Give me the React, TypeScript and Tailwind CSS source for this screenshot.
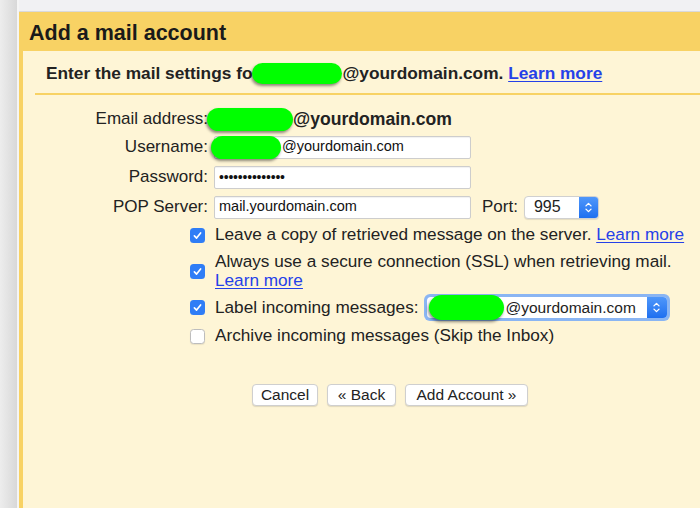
import React from 'react';

// green redaction marks painted over the screenshot
function Blob({ className = '' }: { className?: string }) {
  return (
    <span
      className={`inline-block shrink-0 rounded-full bg-[#00ff00] shadow-[-1px_2px_3px_rgba(0,0,0,0.45)] ${className}`}
    />
  );
}

function Stepper({ className = '' }: { className?: string }) {
  return (
    <span className={`flex items-center justify-center bg-gradient-to-b from-[#4f97fa] to-[#1d6ff0] ${className}`}>
      <svg viewBox="0 0 10 16" className="h-[15px] w-[9px]">
        <path
          d="M2.2 6.2 5 3.4l2.8 2.8M2.2 9.8 5 12.6l2.8-2.8"
          fill="none"
          stroke="white"
          strokeWidth="1.5"
          strokeLinecap="round"
          strokeLinejoin="round"
        />
      </svg>
    </span>
  );
}

function Check({ on }: { on: boolean }) {
  if (!on) {
    return (
      <span className="h-[15px] w-[15px] shrink-0 rounded-[3.5px] border border-[#bdbdbd] bg-white shadow-[0_1px_1px_rgba(0,0,0,0.08)]" />
    );
  }
  return (
    <span className="flex h-[15px] w-[15px] shrink-0 items-center justify-center rounded-[3.5px] bg-[#2f7df6]">
      <svg viewBox="0 0 12 12" className="h-[11px] w-[11px]">
        <path
          d="M2.6 6.4 5 8.8l4.4-5.6"
          fill="none"
          stroke="white"
          strokeWidth="1.8"
          strokeLinecap="round"
          strokeLinejoin="round"
        />
      </svg>
    </span>
  );
}

function Field({ children }: { children?: React.ReactNode }) {
  return (
    <div className="ml-[6px] flex h-[23px] w-[257px] items-center rounded-[2px] border border-[#cdcdcd] bg-white pl-[4px] text-[14.5px] text-[#111] shadow-[inset_0_1px_1px_rgba(0,0,0,0.06)]">
      {children}
    </div>
  );
}

function Label({ children }: { children: React.ReactNode }) {
  return <span className="w-[185px] shrink-0 text-right text-[17px]">{children}</span>;
}

function Btn({ children, w }: { children: React.ReactNode; w: string }) {
  return (
    <button
      className={`flex h-[22px] items-center justify-center rounded-[4px] border border-[#cfcfcf] bg-white text-[15.5px] leading-none text-[#222] shadow-[0_1px_1px_rgba(0,0,0,0.12)] ${w}`}
    >
      {children}
    </button>
  );
}

const link = 'text-[#2541e8] underline underline-offset-2';

export default function App() {
  return (
    <div className="flex h-[508px] w-[700px] overflow-hidden bg-[#fef5d6] font-['Liberation_Sans',Arial,sans-serif] text-[#222]">
      <div className="w-[17px] shrink-0 bg-gradient-to-r from-[#ededed] to-[#d8d8d8]" />
      <div className="w-[2px] shrink-0 bg-[#f5f5f5]" />

      <div className="flex min-w-0 flex-1 flex-col">
        <div className="h-[12px] shrink-0 border-b border-[#d9d9db] bg-[#f1f1f3]" />

        {/* Header */}
        <div className="flex h-[39px] shrink-0 items-center bg-[#f8d264] pl-[10px] pt-[4px]">
          <h1 className="text-[21.5px] font-bold leading-none text-[#1a1a1a]">Add a mail account</h1>
        </div>

        {/* Body */}
        <div className="flex flex-1 flex-col border-l-4 border-[#f8d264] pt-[12px] text-[17.2px]">
          <div className="flex h-[20px] items-center whitespace-nowrap pl-[23px] text-[17.3px] font-bold leading-[20px]">
            Enter the mail settings fo
            <Blob className="h-[21px] w-[90px]" />
            @yourdomain.com.&nbsp;<a className={link}>Learn more</a>
          </div>
          <div className="ml-[12px] mt-[10px] h-[2px] bg-[#f8d264]" />

          {/* Form rows */}
          <div className="mt-[11px] flex flex-col whitespace-nowrap">
            <div className="flex h-[26px] items-center">
              <Label>Email address:</Label>
              <Blob className="-ml-[1px] h-[23px] w-[86px]" />
              <span className="text-[17.6px] font-bold">@yourdomain.com</span>
            </div>
            <div className="flex h-[30px] items-center">
              <Label>Username:</Label>
              <Field>
                <Blob className="-ml-[8px] h-[23px] w-[70px]" />
                <span className="ml-[1px]">@yourdomain.com</span>
              </Field>
            </div>
            <div className="flex h-[30px] items-center">
              <Label>Password:</Label>
              <Field>
                <span className="text-[14px] tracking-[-0.2px]">••••••••••••••</span>
              </Field>
            </div>
            <div className="flex h-[30px] items-center">
              <Label>POP Server:</Label>
              <Field>mail.yourdomain.com</Field>
              <span className="ml-[11px] text-[17px]">Port:</span>
              <div className="ml-[6px] flex h-[23px] w-[75px] items-center overflow-hidden rounded-[4px] border border-[#d0d0d0] bg-white shadow-[0_1px_1px_rgba(0,0,0,0.1)]">
                <span className="flex-1 pl-[9px] text-[16px]">995</span>
                <Stepper className="h-full w-[19px]" />
              </div>
            </div>
          </div>

          {/* Options */}
          <div className="flex flex-col whitespace-nowrap pl-[167px]">
            <div className="mt-[3px] flex h-[20px] items-center gap-[10px]">
              <Check on />
              <span>
                Leave a copy of retrieved message on the server. <a className={link}>Learn more</a>
              </span>
            </div>
            <div className="mt-[7px] flex items-center gap-[10px] leading-[19px]">
              <Check on />
              <div className="flex flex-col">
                <span>Always use a secure connection (SSL) when retrieving mail.</span>
                <a className={link}>Learn more</a>
              </div>
            </div>
            <div className="mt-[3px] flex h-[29px] items-center gap-[10px]">
              <Check on />
              <span>Label incoming messages:</span>
              <div className="-ml-[5px] rounded-[6px] bg-[#8ab5f3] p-[3px]">
                <div className="flex h-[21px] w-[240px] items-center rounded-[4px] bg-white">
                  <Blob className="ml-[2px] h-[25px] w-[75px]" />
                  <span className="ml-[2px] flex-1 text-[15.5px]">@yourdomain.com</span>
                  <Stepper className="h-full w-[20px] rounded-r-[4px]" />
                </div>
              </div>
            </div>
            <div className="mt-[4px] flex h-[20px] items-center gap-[10px]">
              <Check on={false} />
              <span>Archive incoming messages (Skip the Inbox)</span>
            </div>
          </div>

          {/* Actions */}
          <div className="mt-[38px] flex gap-[9px] pl-[229px]">
            <Btn w="w-[66px]">Cancel</Btn>
            <Btn w="w-[69px]">« Back</Btn>
            <Btn w="w-[123px]">Add Account »</Btn>
          </div>
        </div>
      </div>
    </div>
  );
}
